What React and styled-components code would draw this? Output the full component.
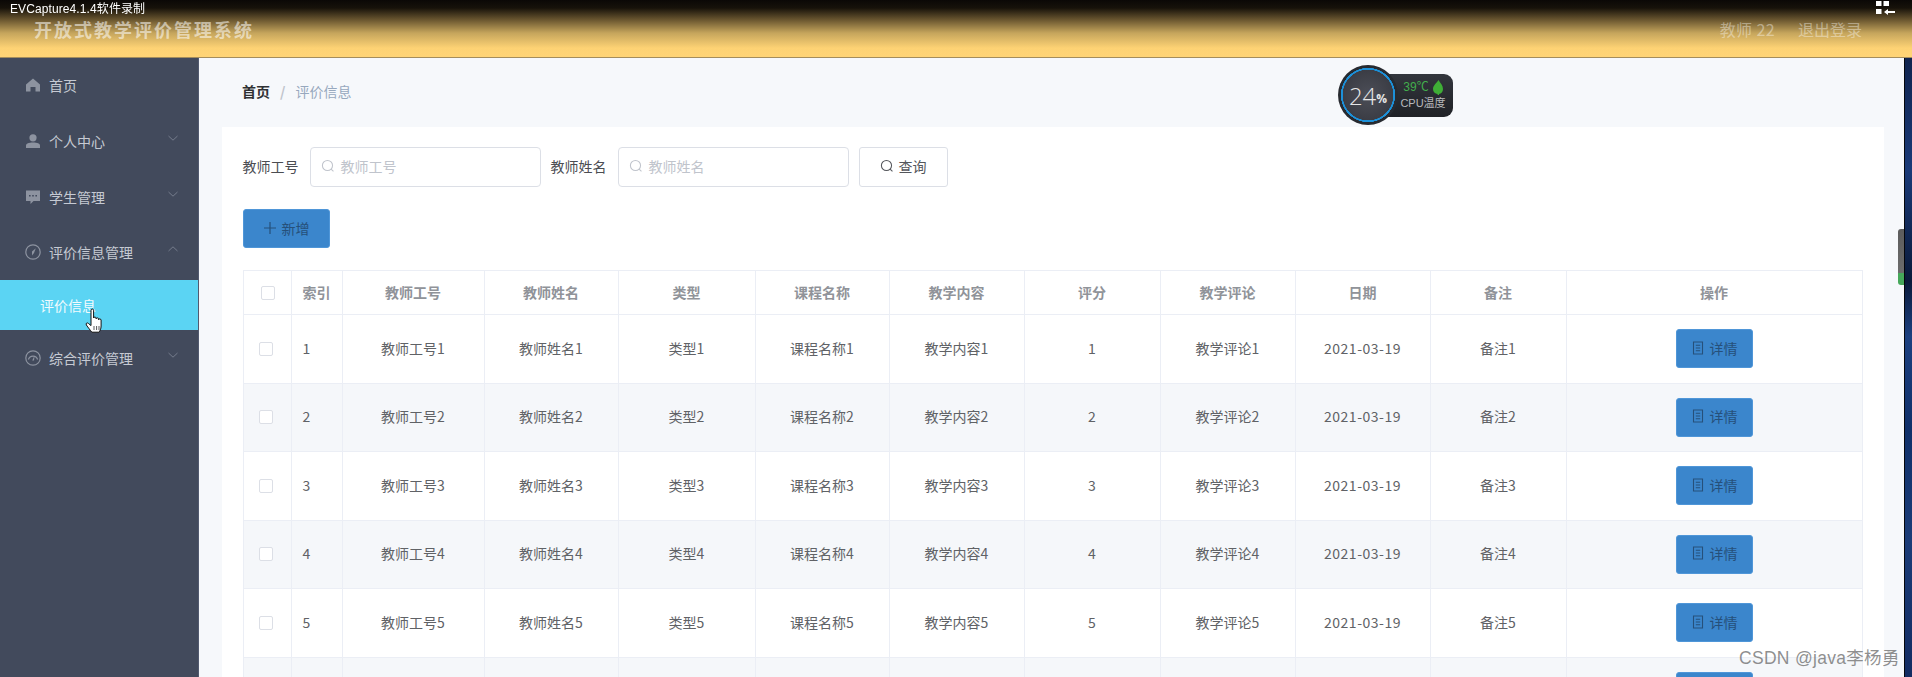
import React from "react";
import styled, { createGlobalStyle } from "styled-components";

const COLUMNS = "48px 51px 142px 134px 137px 134px 135px 136px 135px 135px 136px 295px";
const FIELDS = ["教师工号", "教师姓名", "类型", "课程名称", "教学内容", "评分", "教学评论", "日期", "备注"];
const ROWS = [1, 2, 3, 4, 5];

const GlobalStyle = createGlobalStyle`
  html, body {
    margin: 0;
    padding: 0;
    height: 677px;
    overflow: hidden;
    background: #f6f8fb;
  }
  * { box-sizing: border-box; }
`;

const Page = styled.div`
  position: relative;
  width: 1912px;
  height: 677px;
  overflow: hidden;
  display: flex;
  flex-direction: column;
  font-family: "Noto Sans CJK SC", "Liberation Sans", sans-serif;
  font-size: 14px;
  filter: blur(0.4px);
`;

const Header = styled.header`
  flex: none;
  height: 58px;
  padding: 0 50px 0 34px;
  display: flex;
  align-items: center;
  justify-content: space-between;
  background: linear-gradient(#0b0806 0, #17120a 8px, #6b5730 20px, #c5a55c 33px, #fdd274 48px, #ffd476 56px);
  border-bottom: 1px solid #a48d5c;
`;

const Title = styled.div`
  font-size: 18px;
  font-weight: 700;
  letter-spacing: 2px;
  color: rgba(255, 255, 255, 0.55);
`;

const HeaderRight = styled.div`
  display: flex;
  gap: 23px;
  font-size: 16px;
  color: rgba(255, 255, 255, 0.4);
`;

const TeacherName = styled.span`
  letter-spacing: 0.4px;
`;

const Body = styled.div`
  flex: 1;
  min-height: 0;
  display: flex;
`;

const Sidebar = styled.nav`
  flex: none;
  width: 199px;
  padding-bottom: 2px;
  background: #424a5c;
  border-right: 1px solid #525a70;
`;

const MenuItem = styled.div`
  height: 55.5px;
  padding: 0 19px ${(p) => (p.$first ? "2px" : "0")} 24.5px;
  display: flex;
  align-items: center;
  color: #c6cad3;
  font-size: 14px;
  svg.icon {
    flex: none;
    width: 16px;
    height: 16px;
    margin-right: 8.5px;
    color: #8d93a0;
  }
  span { flex: 1; }
`;

const SubItem = styled.div`
  height: 50px;
  padding-left: 40px;
  display: flex;
  align-items: center;
  background: #5bd4f3;
  color: #f2fbfe;
  font-size: 14px;
`;

const Chevron = styled.svg`
  flex: none;
  width: 12px;
  height: 12px;
  color: #757c8c;
  margin-top: -6px;
`;

const Content = styled.main`
  flex: 1;
  min-width: 0;
  padding-left: 23px;
  background: #f6f8fb;
`;

const Breadcrumb = styled.div`
  height: 69px;
  padding: 0 0 4px 20px;
  display: flex;
  align-items: center;
  gap: 9px;
  color: #97a8be;
  font-size: 14px;
  b { color: #303133; font-weight: 700; }
  i { color: #c0c4cc; font-style: normal; font-weight: 700; margin: 0 1px; }
`;

const Card = styled.section`
  width: 1662px;
  height: 560px;
  padding: 20px 21px 0 20.5px;
  background: #fff;
  overflow: hidden;
`;

const SearchRow = styled.div`
  display: flex;
  align-items: center;
  height: 40px;
`;

const Label = styled.label`
  width: 67px;
  padding-bottom: 2px;
  color: #4b4d52;
  font-size: 14px;
`;

const SearchInput = styled.div`
  width: 231px;
  height: 40px;
  margin-right: 10px;
  padding: 0 0 2px 10px;
  display: flex;
  align-items: center;
  gap: 6px;
  border: 1px solid #dcdfe6;
  border-radius: 4px;
  color: #c0c4cc;
  font-size: 14px;
  svg { width: 14px; height: 14px; }
`;

const Button = styled.button`
  display: inline-flex;
  align-items: center;
  justify-content: center;
  gap: 5px;
  padding: 0 0 2px;
  font-family: inherit;
  font-size: 14px;
  border-radius: 3px;
  width: ${(p) => p.$width}px;
  height: ${(p) => p.$height}px;
  background: ${(p) => (p.$plain ? "#fff" : "#3b86cc")};
  color: ${(p) => (p.$plain ? "#54565b" : "#26507a")};
  border: 1px solid ${(p) => (p.$plain ? "#dcdfe6" : "#4f96d8")};
  svg { width: 14px; height: 14px; flex: none; }
`;

const AddRow = styled.div`
  margin: 22px 0 22px;
  height: 39px;
  display: flex;
`;

const Table = styled.div`
  width: 1620px;
  border-top: 1px solid #ebeef5;
  border-left: 1px solid #ebeef5;
  border-right: 1px solid #ebeef5;
`;

const Row = styled.div`
  display: grid;
  grid-template-columns: ${COLUMNS};
  height: ${(p) => (p.$head ? "44px" : "68.5px")};
  background: ${(p) => (p.$striped ? "#f5f7fa" : "#fff")};
  border-bottom: 1px solid #ebeef5;
`;

const Cell = styled.div`
  display: flex;
  align-items: center;
  justify-content: ${(p) => (p.$left ? "flex-start" : "center")};
  padding: 0 0 2px ${(p) => (p.$left ? "11px" : "0")};
  border-right: 1px solid #ebeef5;
  color: ${(p) => (p.$head ? "#909399" : "#606266")};
  font-weight: ${(p) => (p.$head ? 700 : 400)};
  font-size: 14px;
  letter-spacing: ${(p) => (p.$date ? "0.5px" : "0")};
  &:last-child { border-right: 0; }
  button { margin-top: 2px; }
`;

const Checkbox = styled.span`
  width: 14px;
  height: 14px;
  margin: 2px 0 0 ${(p) => (p.$head ? "2px" : "-2px")};
  background: #fff;
  border: 1px solid #dcdfe6;
  border-radius: 2px;
`;

const DesktopEdge = styled.div`
  flex: none;
  width: 8px;
  border-left: 1px solid #05070c;
  background: linear-gradient(#10244f 0, #1a3a78 18%, #0a1a3a 36%, #1c4080 45%, #10306a 60%, #1b3c78 78%, #132c62 100%);
`;

const Overlay = styled.div`
  position: absolute;
  left: ${(p) => p.$x}px;
  top: ${(p) => p.$y}px;
`;

const CaptureLabel = styled(Overlay)`
  color: #fff;
  font-size: 12px;
  line-height: 18px;
  letter-spacing: 0.1px;
  font-family: "Liberation Sans", "Noto Sans CJK SC", sans-serif;
`;

const Watermark = styled(Overlay)`
  font-size: 17.5px;
  line-height: 22px;
  color: rgba(112, 112, 112, 0.78);
  font-family: "Liberation Sans", "Noto Sans CJK SC", sans-serif;
  letter-spacing: 0.3px;
`;

const ScrollThumb = styled(Overlay)`
  width: 6px;
  height: 56px;
  border-radius: 3px 0 0 3px;
  background: linear-gradient(#5c5c5c 0, #6c6c6c 78%, #46a85a 79%, #46a85a 100%);
`;

const GaugeWrap = styled(Overlay)`
  width: 115px;
  height: 60px;
`;

const GaugePill = styled.div`
  position: absolute;
  left: 30px;
  top: 9px;
  width: 85px;
  height: 43px;
  padding: 5px 7px 0 32px;
  background: linear-gradient(#33363d, #1f2126);
  border-radius: 0 9px 9px 0;
  text-align: center;
  color: #b8b9bc;
  font-size: 11px;
  line-height: 16px;
  font-family: "Liberation Sans", "Noto Sans CJK SC", sans-serif;
  white-space: nowrap;
`;

const GaugeTemp = styled.div`
  display: flex;
  align-items: center;
  justify-content: center;
  gap: 4px;
  color: #42ad4c;
  font-size: 12px;
`;

const GaugeCircle = styled.div`
  position: absolute;
  left: 0;
  top: 0;
  width: 60px;
  height: 60px;
  display: flex;
  align-items: center;
  justify-content: center;
  border-radius: 50%;
  background: radial-gradient(circle closest-side, #4c4e57 0, #3b3d45 84%, #1c90d8 85%, #1c90d8 90%, #272a30 91%);
  color: #e6e6e6;
  font-size: 24px;
  font-family: "Open Sans", "Liberation Sans", sans-serif;
  font-weight: 300;
  small { font-size: 12px; font-weight: 700; margin-top: 6px; }
`;

const HomeIcon = () => (
  <svg className="icon" viewBox="0 0 16 16" fill="currentColor"><path d="M8 1.5 15 7.4V14.5H10.5V10H5.5V14.5H1V7.4Z" /></svg>
);
const UserIcon = () => (
  <svg className="icon" viewBox="0 0 16 16" fill="currentColor"><circle cx="8" cy="4.8" r="3.6" /><path d="M1 15v-2.2C1 10.4 3.6 9.6 8 9.6s7 .8 7 3.2V15Z" /></svg>
);
const ChatIcon = () => (
  <svg className="icon" viewBox="0 0 16 16" fill="currentColor"><path fillRule="evenodd" d="M1 1.5h14v10.5H8.5L5.5 15v-3H1ZM4 6v1.6h1.6V6Zm3.2 0v1.6h1.6V6Zm3.2 0v1.6H12V6Z" /></svg>
);
const CompassIcon = () => (
  <svg className="icon" viewBox="0 0 16 16" fill="none" stroke="currentColor"><circle cx="8" cy="8" r="7.2" strokeWidth="1.2" /><path d="M10.8 4.2 9 9 7 11.6 7 7.4Z" fill="currentColor" stroke="none" /></svg>
);
const GaugeIcon = () => (
  <svg className="icon" viewBox="0 0 16 16" fill="none" stroke="currentColor"><circle cx="8" cy="8" r="7.2" strokeWidth="1.2" /><path d="M3.4 9.5A4.8 4.8 0 0 1 12.6 9.5" strokeWidth="1.2" /><path d="M9.6 5.4 9 10.4H7.2Z" fill="currentColor" stroke="none" /></svg>
);
const SearchIcon = () => (
  <svg viewBox="0 0 16 16" fill="none" stroke="currentColor" strokeWidth="1.2"><circle cx="7.4" cy="7.4" r="5.8" /><path d="m11.6 11.6 2.6 2.6" /></svg>
);
const PlusIcon = () => (
  <svg viewBox="0 0 14 14" fill="none" stroke="currentColor" strokeWidth="1.2"><path d="M7 1v12M1 7h12" /></svg>
);
const DocIcon = () => (
  <svg viewBox="0 0 14 14" fill="none" stroke="currentColor" strokeWidth="1.1"><path d="M2.5 1h9v12h-9ZM4.8 4.2h4.4M4.8 7h4.4M4.8 9.8h4.4" /></svg>
);
const ArrowIcon = ({ up }) => (
  <Chevron viewBox="0 0 12 12" fill="none" stroke="currentColor" strokeWidth="1">
    <path d={up ? "M1.5 8 6 3.8 10.5 8" : "M1.5 4 6 8.2 10.5 4"} />
  </Chevron>
);

const CaptureMark = () => (
  <Overlay $x={1876} $y={0}>
    <svg width="20" height="16" viewBox="0 0 20 16" fill="#fff">
      <rect x="0" y="1" width="5.5" height="5" />
      <rect x="7.5" y="1" width="5.5" height="5" />
      <rect x="0" y="9" width="5.5" height="5" />
      <path d="M8 12 12 9V11H19V13H12V15Z" />
    </svg>
  </Overlay>
);

const HandCursor = () => (
  <Overlay $x={85} $y={308}>
    <svg width="20" height="26" viewBox="0 0 20 26" fill="#fff" stroke="#111" strokeWidth="1" strokeLinejoin="round">
      <path d="M6 2.2c0-1.6 2.6-1.6 2.6 0V10c0-1.2 2.5-1.2 2.5 0v.8c0-1.2 2.5-1.2 2.5 0v1c0-1.2 2.5-1.1 2.5.2v6c0 3-1.2 5-2 6.2H6.8C5.6 22.4 3 19.6 1.4 17c-1-1.6.8-2.8 2-1.6L6 17.6Z" />
      <path d="M9 18v4M11.6 18v4M14 18v4" strokeWidth="0.7" />
    </svg>
  </Overlay>
);

const CpuGauge = () => (
  <GaugeWrap $x={1338} $y={65}>
    <GaugePill>
      <GaugeTemp>
        39℃
        <svg width="10" height="15" viewBox="0 0 10 15" fill="#3fae36">
          <path d="M5.4 0C7.4 3 10 5.4 10 9c0 2.8-1.8 4.6-4 4.9V15H4.6v-1.1C2 13.6 0 11.8 0 9 0 5.4 3.6 3.2 5.4 0Z" />
        </svg>
      </GaugeTemp>
      CPU温度
    </GaugePill>
    <GaugeCircle>24<small>%</small></GaugeCircle>
  </GaugeWrap>
);

const App = () => {
  return (
    <Page>
      <GlobalStyle />
      <Header>
        <Title>开放式教学评价管理系统</Title>
        <HeaderRight>
          <TeacherName>教师 22</TeacherName>
          <span>退出登录</span>
        </HeaderRight>
      </Header>
      <Body>
        <Sidebar>
          <MenuItem $first><HomeIcon /><span>首页</span></MenuItem>
          <MenuItem><UserIcon /><span>个人中心</span><ArrowIcon /></MenuItem>
          <MenuItem><ChatIcon /><span>学生管理</span><ArrowIcon /></MenuItem>
          <MenuItem><CompassIcon /><span>评价信息管理</span><ArrowIcon up /></MenuItem>
          <SubItem>评价信息</SubItem>
          <MenuItem><GaugeIcon /><span>综合评价管理</span><ArrowIcon /></MenuItem>
        </Sidebar>
        <Content>
          <Breadcrumb><b>首页</b><i>/</i><span>评价信息</span></Breadcrumb>
          <Card>
            <SearchRow>
              <Label>教师工号</Label>
              <SearchInput><SearchIcon />教师工号</SearchInput>
              <Label>教师姓名</Label>
              <SearchInput><SearchIcon />教师姓名</SearchInput>
              <Button $plain $width={89} $height={40}><SearchIcon />查询</Button>
            </SearchRow>
            <AddRow>
              <Button $width={87} $height={39}><PlusIcon />新增</Button>
            </AddRow>
            <Table>
              <Row $head>
                <Cell $head><Checkbox $head /></Cell>
                <Cell $head $left>索引</Cell>
                {FIELDS.map((f) => <Cell $head key={f}>{f}</Cell>)}
                <Cell $head>操作</Cell>
              </Row>
              {ROWS.map((n) => (
                <Row key={n} $striped={n % 2 === 0}>
                  <Cell><Checkbox /></Cell>
                  <Cell $left>{n}</Cell>
                  {FIELDS.map((f) => (
                    <Cell key={f} $date={f === "日期"}>
                      {f === "评分" ? n : f === "日期" ? "2021-03-19" : f + n}
                    </Cell>
                  ))}
                  <Cell><Button $width={77} $height={39}><DocIcon />详情</Button></Cell>
                </Row>
              ))}
              {/* sixth row is cut by the window, only the top of its button shows */}
              <Row $striped>
                <Cell />
                <Cell />
                {FIELDS.map((f) => <Cell key={f} />)}
                <Cell><Button $width={77} $height={39} /></Cell>
              </Row>
            </Table>
          </Card>
        </Content>
        <DesktopEdge />
      </Body>
      <CaptureLabel $x={10} $y={0}>EVCapture4.1.4软件录制</CaptureLabel>
      <CaptureMark />
      <CpuGauge />
      <HandCursor />
      <ScrollThumb $x={1898} $y={229} />
      <Watermark $x={1739} $y={647}>CSDN @java李杨勇</Watermark>
    </Page>
  );
};

export default App;
